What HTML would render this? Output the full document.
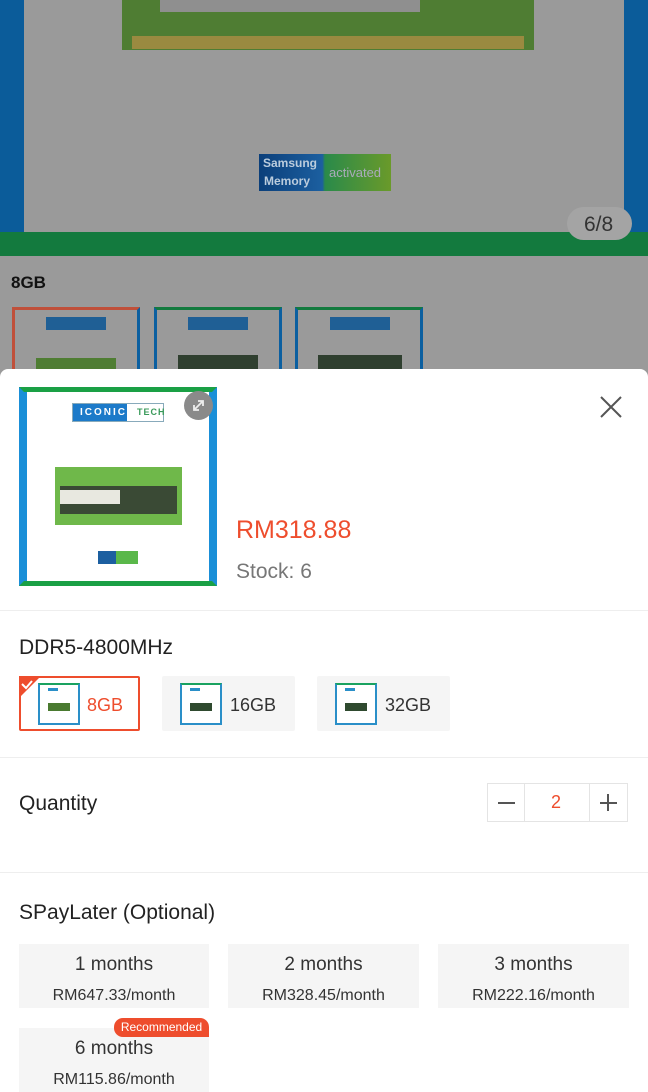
<!DOCTYPE html>
<html><head><meta charset="utf-8"><style>
*{margin:0;padding:0;box-sizing:border-box}
body{width:648px;height:1080px;overflow:hidden;position:relative;font-family:"Liberation Sans",sans-serif;background:#fff}
.a{position:absolute}
.t{position:absolute;white-space:nowrap;line-height:1}
.card{position:absolute;background:#f5f5f5;text-align:center;color:#333}
.card .m{font-size:19px;margin-top:10px}
.card .p{font-size:16px;margin-top:11px}
.opt{position:absolute;top:676px;height:55px;background:#f5f5f5;border-radius:2px}
.th{position:absolute;left:18px;top:7px;width:42px;height:42px;border:2px solid #2a8fc8;border-top-color:#1aa260;background:#fff}
.th i{position:absolute;left:8px;top:18px;width:22px;height:8px;background:#2f4a2f}
.th b{position:absolute;left:8px;top:3px;width:10px;height:3px;background:#2a8fc8}
.opt span{position:absolute;left:68px;top:19px;font-size:18px;color:#333}
</style></head><body>
<div class="a" style="left:0;top:0;width:648px;height:380px;background:#9a9a9a"></div>
<div class="a" style="left:0;top:0;width:24px;height:256px;background:#0b5c9a"></div>
<div class="a" style="left:624px;top:0;width:24px;height:256px;background:#0b5c9a"></div>
<div class="a" style="left:0;top:232px;width:648px;height:24px;background:#137a3e"></div>
<div class="a" style="left:122px;top:0;width:412px;height:50px;background:#4f7d33"></div>
<div class="a" style="left:132px;top:36px;width:392px;height:13px;background:#9a8a40"></div>
<div class="a" style="left:160px;top:0;width:260px;height:12px;background:#8f8f8f"></div>
<div class="a" style="left:259px;top:154px;width:132px;height:37px;background:linear-gradient(90deg,#0b3f7a 0%,#1c5fa0 48%,#2a8a4a 50%,#6a9a2a 100%)"></div>
<div class="t" style="left:263px;top:157px;font-size:12px;color:#bcd;font-weight:bold">Samsung</div>
<div class="t" style="left:264px;top:175px;font-size:12px;color:#bcd;font-weight:bold">Memory</div>
<div class="t" style="left:329px;top:166px;font-size:13px;color:#aab">activated</div>
<div class="a" style="left:567px;top:207px;width:65px;height:33px;border-radius:17px;background:#a4a4a4"></div>
<div class="t" style="left:584px;top:214px;font-size:21px;color:#333">6/8</div>
<div class="t" style="left:11px;top:274px;font-size:17px;font-weight:bold;color:#111">8GB</div>
<div class="a" style="left:12px;top:307px;width:128px;height:70px;border:3px solid #0b5fa0;border-top-color:#c0503a;border-left-color:#c0503a;background:#9a9a9a"></div>
<div class="a" style="left:154px;top:307px;width:128px;height:70px;border:3px solid #0b5fa0;border-top-color:#137a3e;background:#9a9a9a"></div>
<div class="a" style="left:295px;top:307px;width:128px;height:70px;border:3px solid #0b5fa0;border-top-color:#137a3e;background:#9a9a9a"></div>
<div class="a" style="left:46px;top:317px;width:60px;height:13px;background:#1f5f95"></div>
<div class="a" style="left:188px;top:317px;width:60px;height:13px;background:#1f5f95"></div>
<div class="a" style="left:330px;top:317px;width:60px;height:13px;background:#1f5f95"></div>
<div class="a" style="left:36px;top:358px;width:80px;height:12px;background:#4f7d33"></div>
<div class="a" style="left:178px;top:355px;width:80px;height:15px;background:#2f3f2f"></div>
<div class="a" style="left:318px;top:355px;width:84px;height:15px;background:#2f3f2f"></div>
<div class="a" style="left:0;top:369px;width:648px;height:711px;background:#fff;border-radius:8px 8px 0 0"></div>
<div class="a" style="left:19px;top:387px;width:198px;height:199px;border:5px solid #1aa045;border-left-color:#1a8fd8;border-right-color:#1a8fd8;background:#fff"></div>
<div class="a" style="left:24px;top:392px;width:188px;height:189px;border-left:3px solid #1a8fd8;border-right:3px solid #1a8fd8"></div>
<div class="a" style="left:72px;top:403px;width:92px;height:19px;border:1px solid #8ab;background:linear-gradient(90deg,#1c7ac9 60%,#fff 60%)"></div>
<div class="t" style="left:80px;top:408px;font-size:10px;font-weight:bold;color:#fff;letter-spacing:2px">ICONIC</div>
<div class="t" style="left:137px;top:408px;font-size:9px;font-weight:bold;color:#3a9a5a;letter-spacing:1px">TECH</div>
<div class="a" style="left:184px;top:391px;width:29px;height:29px;border-radius:50%;background:#8a8a8a"></div>
<svg class="a" style="left:188px;top:395px" width="21" height="21" viewBox="0 0 21 21" fill="none" stroke="#eee" stroke-width="1.8"><path d="M6 15L15 6M10 6h5v5M6 10v5h5"/></svg>
<div class="a" style="left:55px;top:467px;width:127px;height:58px;background:#6fb84a"></div>
<div class="a" style="left:60px;top:486px;width:117px;height:28px;background:#3a4a35"></div>
<div class="a" style="left:60px;top:490px;width:60px;height:14px;background:#e8e8e0"></div>
<div class="a" style="left:98px;top:551px;width:40px;height:13px;background:linear-gradient(90deg,#1c5fa0 45%,#5ab84a 45%)"></div>
<svg class="a" style="left:599px;top:395px" width="24" height="24" viewBox="0 0 24 24" stroke="#555" stroke-width="2"><path d="M2 2L22 22M22 2L2 22"/></svg>
<div class="t" style="left:236px;top:518px;font-size:25px;color:#ee4d2d">RM318.88</div>
<div class="t" style="left:236px;top:561px;font-size:21px;color:#777">Stock: 6</div>
<div class="a" style="left:0;top:610px;width:648px;height:1px;background:#eee"></div>
<div class="t" style="left:19px;top:637px;font-size:21px;color:#222">DDR5-4800MHz</div>
<div class="opt" style="left:19px;width:121px;background:#fff;border:2px solid #ee4d2d"></div>
<svg class="a" style="left:19px;top:676px" width="22" height="22"><path d="M0 0H22L0 22Z" fill="#ee4d2d"/><path d="M3 8L7 12L13 5" stroke="#fff" stroke-width="2" fill="none"/></svg>
<div class="a" style="left:19px;top:676px;width:121px;height:55px"><div class="th" style="left:19px"><b></b><i style="background:#4a7a30"></i></div><span style="left:68px;top:19px;position:absolute;font-size:18px;color:#ee4d2d">8GB</span></div>
<div class="opt" style="left:162px;width:133px"><div class="th"><b></b><i></i></div><span>16GB</span></div>
<div class="opt" style="left:317px;width:133px"><div class="th"><b></b><i></i></div><span>32GB</span></div>
<div class="a" style="left:0;top:757px;width:648px;height:1px;background:#eee"></div>
<div class="t" style="left:19px;top:793px;font-size:21px;color:#222">Quantity</div>
<div class="a" style="left:487px;top:783px;width:141px;height:39px;border:1px solid #e4e4e4"></div>
<div class="a" style="left:524px;top:783px;width:1px;height:39px;background:#e4e4e4"></div>
<div class="a" style="left:589px;top:783px;width:1px;height:39px;background:#e4e4e4"></div>
<div class="a" style="left:498px;top:802px;width:17px;height:2px;background:#555"></div>
<div class="a" style="left:600px;top:802px;width:17px;height:2px;background:#555"></div>
<div class="a" style="left:607px;top:794px;width:2px;height:17px;background:#555"></div>
<div class="t" style="left:551px;top:793px;font-size:18px;color:#ee4d2d">2</div>
<div class="a" style="left:0;top:872px;width:648px;height:1px;background:#eee"></div>
<div class="t" style="left:19px;top:902px;font-size:21px;color:#222">SPayLater (Optional)</div>
<div class="card" style="left:19px;top:944px;width:190px;height:64px"><div class="m">1 months</div><div class="p">RM647.33/month</div></div>
<div class="card" style="left:228px;top:944px;width:191px;height:64px"><div class="m">2 months</div><div class="p">RM328.45/month</div></div>
<div class="card" style="left:438px;top:944px;width:191px;height:64px"><div class="m">3 months</div><div class="p">RM222.16/month</div></div>
<div class="card" style="left:19px;top:1028px;width:190px;height:64px"><div class="m" style="margin-top:10px">6 months</div><div class="p">RM115.86/month</div></div>
<div class="a" style="left:114px;top:1018px;width:95px;height:19px;background:#ee4d2d;border-radius:9px 9px 0 9px;color:#fff;font-size:12px;text-align:center;line-height:19px">Recommended</div>
</body></html>
